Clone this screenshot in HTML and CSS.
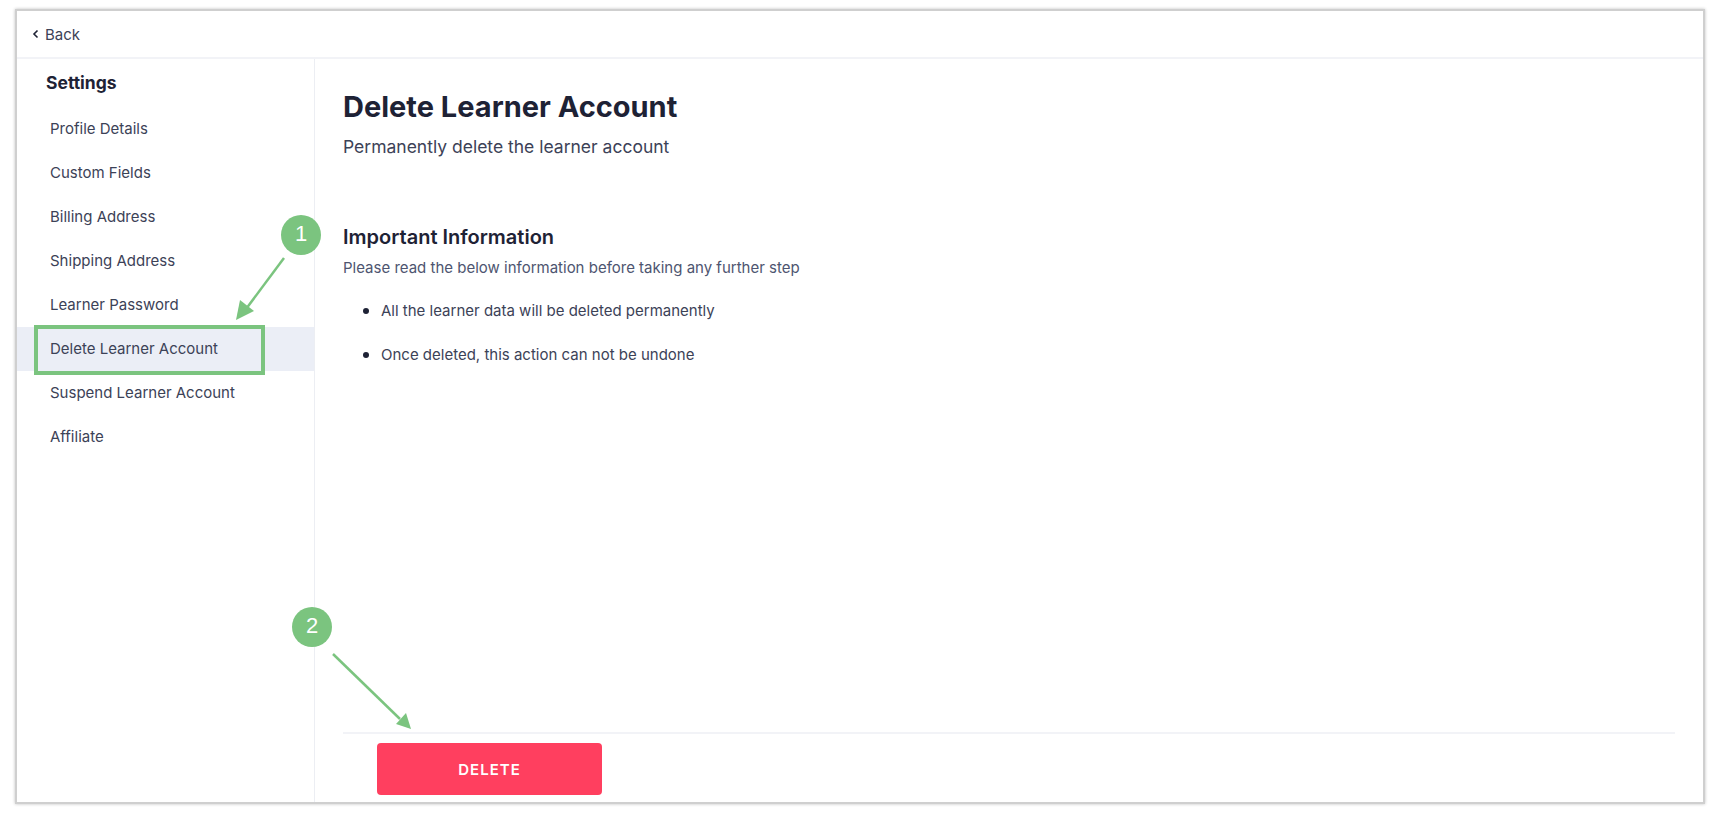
FILE: index.html
```html
<!DOCTYPE html>
<html lang="en">
  <head>
    <meta charset="UTF-8" />
    <title>Delete Learner Account</title>
    <link rel="stylesheet" href="styles.css">
  </head>

  <body>
    <div class="window">
      <div class="top-bar">
        <svg class="back-icon" width="8" height="10" viewBox="0 0 8 10">
          <path d="M5.5 1.5 L2 5 L5.5 8.5" fill="none" stroke="#1e2235" stroke-width="1.6" />
        </svg>
        <span>Back</span>
      </div>
      <div class="main">
        <div class="sidebar">
          <h2>Settings</h2>
          <a class="nav-item">Profile Details</a>
          <a class="nav-item">Custom Fields</a>
          <a class="nav-item">Billing Address</a>
          <a class="nav-item">Shipping Address</a>
          <a class="nav-item">Learner Password</a>
          <a class="nav-item active">Delete Learner Account</a>
          <a class="nav-item">Suspend Learner Account</a>
          <a class="nav-item">Affiliate</a>
        </div>
        <div class="content">
          <div class="content-body">
            <h1>Delete Learner Account</h1>
            <p class="subtitle">Permanently delete the learner account</p>
            <h3>Important Information</h3>
            <p class="hint">Please read the below information before taking any further step</p>
            <ul>
              <li>All the learner data will be deleted permanently</li>
              <li>Once deleted, this action can not be undone</li>
            </ul>
          </div>
          <div class="footer">
            <button class="delete-btn">DELETE</button>
          </div>
        </div>
      </div>
    </div>

    <!-- annotations on top of the screenshot -->
    <div class="callout-box"></div>
    <div class="badge badge-one">1</div>
    <div class="badge badge-two">2</div>
    <svg class="arrows" width="1720" height="813" viewBox="0 0 1720 813">
      <path d="M284 258 L246 309" fill="none" stroke="#7bc47f" stroke-width="2.5" />
      <path d="M236 320 L240 300 L254 311 Z" fill="#7bc47f" />
      <path d="M333 654 L400 719" fill="none" stroke="#7bc47f" stroke-width="2.5" />
      <path d="M411 729 L396 724 L406 713 Z" fill="#7bc47f" />
    </svg>
  </body>
</html>
```

FILE: styles.css
```css
* {
  margin: 0;
  padding: 0;
  box-sizing: border-box;
}

body {
  font-family: "Inter", "Noto Sans", sans-serif;
  background-color: #fff;
  color: #1e2235;
  height: 813px;
  padding: 9px 15px 9px 15px;
  overflow: hidden;
  position: relative;
}

.window {
  height: 795px;
  width: 1690px;
  background-color: #fff;
  border: 2px solid #cfcfcf;
  box-shadow: 0 0 3px rgba(0, 0, 0, 0.25);
  display: flex;
  flex-direction: column;
}

.top-bar {
  height: 48px;
  flex: none;
  display: flex;
  align-items: center;
  gap: 5px;
  padding-left: 15px;
  border-bottom: 2px solid #f2f3f7;
  font-size: 15px;
  color: #3c4257;
}

.main {
  flex: 1;
  display: flex;
}

.sidebar {
  width: 298px;
  flex: none;
  border-right: 1px solid #eceef3;
}

.sidebar h2 {
  font-size: 17.5px;
  font-weight: 700;
  color: #1e2235;
  padding-left: 29px;
  height: 48px;
  line-height: 48px;
}

.nav-item {
  display: block;
  height: 44px;
  line-height: 44px;
  padding-left: 33px;
  font-size: 15px;
  color: #3c4257;
}

.nav-item.active {
  background-color: #ebeef6;
}

.content {
  flex: 1;
  display: flex;
  flex-direction: column;
  padding: 0 28px 0 28px;
}

.content-body {
  flex: 1;
}

h1 {
  font-size: 29px;
  font-weight: 700;
  color: #1e2235;
  margin-top: 28px;
  line-height: 40px;
}

.subtitle {
  font-size: 17.5px;
  line-height: 26px;
  margin-top: 7px;
  color: #3c4257;
}

h3 {
  font-size: 20px;
  font-weight: 600;
  color: #1e2235;
  margin-top: 62px;
  line-height: 30px;
}

.hint {
  font-size: 15px;
  line-height: 22px;
  margin-top: 5px;
  color: #4e5570;
}

ul {
  list-style: none;
  margin-top: 10px;
}

li {
  position: relative;
  font-size: 15px;
  line-height: 44px;
  padding-left: 38px;
  color: #3c4257;
}

li::before {
  content: "";
  position: absolute;
  left: 20px;
  top: 19px;
  width: 6px;
  height: 6px;
  border-radius: 50%;
  background-color: #1e2235;
}

.footer {
  height: 70px;
  flex: none;
  border-top: 2px solid #f2f3f7;
  padding: 9px 0 0 34px;
}

.delete-btn {
  width: 225px;
  height: 52px;
  background-color: #ff3f5f;
  color: #fff;
  border: none;
  border-radius: 4px;
  font-family: inherit;
  font-size: 15px;
  font-weight: 600;
  letter-spacing: 1px;
}

.callout-box {
  position: absolute;
  left: 34px;
  top: 325px;
  width: 231px;
  height: 50px;
  border: 4px solid #7bc47f;
}

.badge {
  position: absolute;
  width: 40px;
  height: 40px;
  border-radius: 50%;
  background-color: #7bc47f;
  color: #fff;
  font-family: "Liberation Sans", sans-serif;
  font-size: 22px;
  line-height: 38px;
  text-align: center;
}

.badge-one {
  left: 281px;
  top: 215px;
}

.badge-two {
  left: 292px;
  top: 607px;
}

.arrows {
  position: absolute;
  left: 0;
  top: 0;
}
```
